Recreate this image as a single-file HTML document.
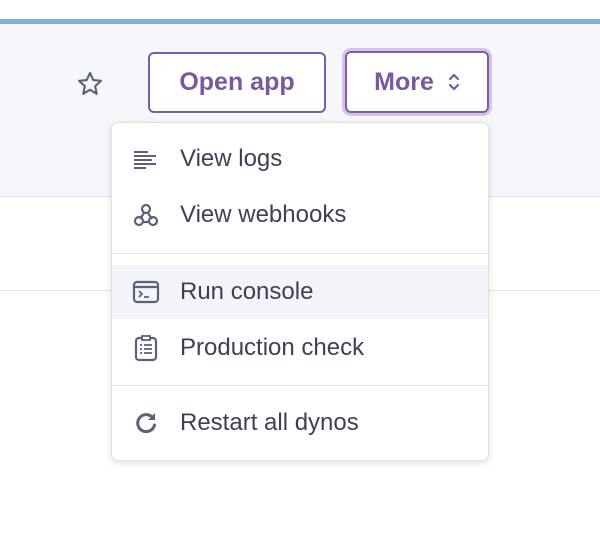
<!DOCTYPE html>
<html><head><style>
body{margin:0;width:600px;height:533px;position:relative;overflow:hidden;background:#fff;font-family:"Liberation Sans",sans-serif}
.top{position:absolute;left:0;top:0;width:600px;height:19px;background:#fff}
.blue{position:absolute;left:0;top:19px;width:600px;height:5px;background:#80b1dc}
.hdr{position:absolute;left:0;top:24px;width:600px;height:172px;background:#f6f7fa;border-bottom:1px solid #e3e5ec}
.line2{position:absolute;left:0;top:290px;width:600px;height:1px;background:#e3e5ec}
.btn{position:absolute;box-sizing:border-box;border:2px solid #7b5ea4;border-radius:6px;background:#fff;color:#79589f;font-weight:bold;font-size:25px;display:flex;align-items:center;justify-content:center}
.menu{position:absolute;left:111px;top:122px;width:378px;height:339px;box-sizing:border-box;background:#fff;border:1px solid #dfe1e8;border-radius:7px;box-shadow:0 2px 8px rgba(0,0,0,.12)}
.it{position:absolute;left:0;width:376px;height:54px;display:flex;align-items:center;font-size:24px;color:#3f3f55}
.it span{position:absolute;left:68px}
.it svg{position:absolute;left:20px}
.sep{position:absolute;left:0;width:376px;height:1px;background:#e3e5ec}
</style></head><body>
<div class="top"></div><div class="blue"></div><div class="hdr"></div><div class="line2"></div>
<svg style="position:absolute;left:76px;top:70px" width="28" height="28" viewBox="0 0 24 24"><path d="M12 2.5l2.8 6.1 6.6.7-5 4.5 1.4 6.6L12 17l-5.8 3.4 1.4-6.6-5-4.5 6.6-.7z" fill="none" stroke="#5a6278" stroke-width="1.8" stroke-linejoin="round"/></svg>
<div class="btn" style="left:148px;top:52px;width:178px;height:61px">Open app</div>
<div class="btn" style="left:345px;top:51px;width:144px;height:62px;box-shadow:0 0 0 3px #d4c4ea">More<svg style="margin-left:14px" width="12" height="20" viewBox="0 0 12 20"><path d="M2 7l4-4 4 4M2 13l4 4 4-4" fill="none" stroke="#79589f" stroke-width="2.2" stroke-linecap="round" stroke-linejoin="round"/></svg></div>
<div class="menu">
<div class="it" style="top:9px"><svg width="28" height="20" viewBox="0 0 28 20"><path d="M2 3h14M2 7h22M2 11h18M2 15h22M2 19h12" stroke="#5a6278" stroke-width="2"/></svg><span>View logs</span></div>
<div class="it" style="top:65px"><svg width="28" height="28" viewBox="0 0 28 28"><g fill="none" stroke="#5a6278" stroke-width="2.2"><circle cx="14" cy="8" r="4"/><circle cx="7" cy="20" r="4"/><circle cx="21" cy="20" r="4"/><path d="M12 12l-4 6M16 12l4 6M11 21h6"/></g></svg><span>View webhooks</span></div>
<div class="sep" style="top:130px"></div>
<div class="it" style="top:142px;background:#f4f5f9"><svg width="28" height="24" viewBox="0 0 28 24"><rect x="2" y="2" width="24" height="20" rx="3" fill="none" stroke="#5a6278" stroke-width="2.2"/><path d="M2 7h24" stroke="#5a6278" stroke-width="2.2"/><path d="M7 11l3 3-3 3M12 17h5" fill="none" stroke="#5a6278" stroke-width="1.8"/></svg><span>Run console</span></div>
<div class="it" style="top:198px"><svg width="28" height="28" viewBox="0 0 28 28"><rect x="4" y="4" width="20" height="22" rx="3" fill="none" stroke="#5a6278" stroke-width="2.2"/><rect x="10" y="2" width="8" height="4" fill="#fff" stroke="#5a6278" stroke-width="1.8"/><path d="M8 11h2M12 11h8M8 15h2M12 15h8M8 19h2M12 19h8" stroke="#5a6278" stroke-width="1.8"/></svg><span>Production check</span></div>
<div class="sep" style="top:262px"></div>
<div class="it" style="top:273px"><svg width="28" height="28" viewBox="0 0 28 28"><path d="M21 9A8.5 8.5 0 1 0 22.5 16" fill="none" stroke="#5a6278" stroke-width="3" stroke-linecap="round"/><path d="M23 4v7h-7z" fill="#5a6278"/></svg><span>Restart all dynos</span></div>
</div>
</body></html>
